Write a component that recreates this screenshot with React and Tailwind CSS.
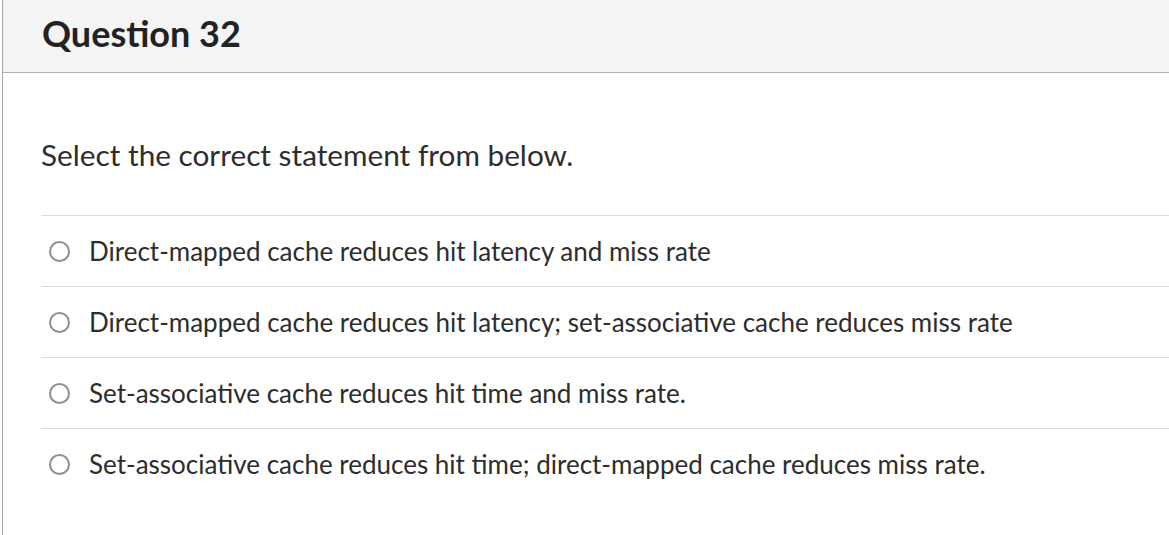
const answers = [
  "Direct-mapped cache reduces hit latency and miss rate",
  "Direct-mapped cache reduces hit latency; set-associative cache reduces miss rate",
  "Set-associative cache reduces hit time and miss rate.",
  "Set-associative cache reduces hit time; direct-mapped cache reduces miss rate.",
];

export default function App() {
  return (
    <div className="min-h-[535px] bg-white font-['Lato','Liberation_Sans',sans-serif] text-[#2d2d2d]">
      <div className="ml-[2px] min-h-[535px] border-l border-[#a9a9a9]">
        {/* header */}
        <div className="flex h-[73px] items-center border-b border-[#b0b0b0] bg-[#f4f4f4] pl-[39px]">
          <h2 className="pb-[6px] text-[36px] font-bold leading-[44px] text-[#222]">Question 32</h2>
        </div>

        <div className="pl-[38px]">
          <p className="mt-[63px] text-[29.75px] leading-[38px]">Select the correct statement from below.</p>

          <div className="mt-[41px]">
            {answers.map((a, i) => (
              <label key={i} className="flex h-[71px] items-center border-t border-[#dcdcdc]">
                <span className="ml-[8px] mr-[19px] h-[21px] w-[21px] shrink-0 rounded-full border-2 border-[#8f8f8f] bg-white" />
                <span className="text-[26px] leading-[32px]">{a}</span>
              </label>
            ))}
          </div>
        </div>
      </div>
    </div>
  );
}
